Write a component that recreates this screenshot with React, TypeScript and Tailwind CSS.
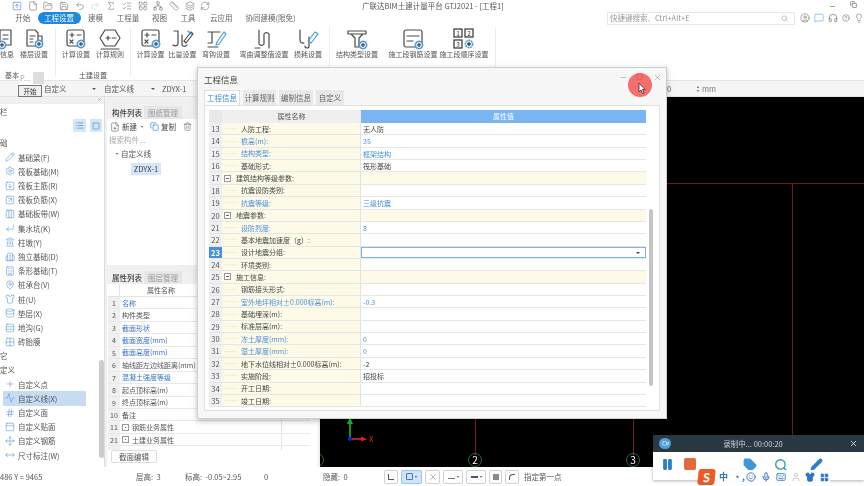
import type { ReactNode } from 'react';
import {
  SquareArrowUp, File, FolderOpen, Save, Undo2, Redo2, Sigma, ListChecks, LayoutGrid, Network, Ruler, Layers, RefreshCw,
  Search, CircleUser, MessageSquare, Headphones, HelpCircle, Lightbulb, X, Minus, Square, Copy, Trash2, FilePlus,
  Pencil, Settings, SquareArrowDown, SquareArrowUpRight, Columns3, Database, Landmark, Building2, Building, MapPin,
  Rows3, Grid2x2, Plus, Activity, Hash, PanelTop, Move, MoveHorizontal, List, Smile, Mic, Keyboard, User, Shirt,
  Pause, Tag, Video, CornerDownLeft,
} from 'lucide-react';

const Gear = ({ x = 17, y = 17 }: { x?: number; y?: number }) => (
  <g>
    <circle cx={x} cy={y} r={3.6} fill="#fff" stroke="#4b9be0" strokeWidth={1.6} strokeDasharray="2 .6" />
    <circle cx={x} cy={y} r={1.2} fill="#4b9be0" />
  </g>
);

const Ico = ({ children }: { children: ReactNode }) => (
  <svg width={24} height={24} viewBox="0 0 24 24" fill="none" stroke="#4a4a4a" strokeWidth={1.2} strokeLinecap="round" strokeLinejoin="round">
    {children}
  </svg>
);

const CalcIcon = () => (
  <Ico>
    <rect x={3} y={3} width={17} height={16} rx={2} />
    <path d="M6 8h4M8 6v4M13 8h4M6 13l3 3M9 13l-3 3" />
    <Gear />
  </Ico>
);

const ribbonIcons: Record<string, ReactNode> = {
  info: <Ico><path d="M5 3h11v15H5zM8 8h5M8 12h5" /><Gear x={7} y={18} /></Ico>,
  floor: <Ico><path d="M5 3h8l3 3v13H5zM8 9h5M8 12h3M8 15h3M16 9h4v5" /><Gear /></Ico>,
  calc: <CalcIcon />,
  rule: <Ico><path d="M7 3h10l5 8-5 8H7l-5-8zM8 11h4M10 9v4M14 11h4M3 22h18" /></Ico>,
  ratio: <Ico><path d="M3 4h4v13a3 3 0 0 1-5 1M11 8v10a3 3 0 0 0 5 0M13 14L20 5l2 2-7 9z" stroke="#4a4a4a" /><path d="M17 4l4 4" stroke="#4b9be0" /></Ico>,
  hook: <Ico><path d="M4 5h12M8 5v11H4M4 20h10" /><path d="M13 15l7-10 2 2-7 10-3 1z" stroke="#4b9be0" /></Ico>,
  bend: <Ico><path d="M7 3v14a3 3 0 0 0 5 0V7a3 3 0 0 1 5 0v14M3 21h5" /></Ico>,
  loss: <Ico><path d="M4 3v10a3 3 0 0 0 4 3M13 10v9a2 2 0 0 1-4 0" /><path d="M12 14l7-9 3 2-7 9z" stroke="#4b9be0" /></Ico>,
  struct: <Ico><path d="M3 4h18v3H3zM6 7l4 4v9h4v-9l4-4" /><Gear x={18} y={18} /></Ico>,
  seg: <Ico><rect x={3} y={3} width={18} height={17} rx={2} /><path d="M6 9h12M6 14h6" /><Gear x={18} y={18} /></Ico>,
  order: (
    <svg width={24} height={24} viewBox="0 0 24 24" fill="none" stroke="#333" strokeWidth={1.2}>
      <rect x={2} y={2} width={8} height={8} />
      <rect x={13} y={2} width={8} height={8} />
      <rect x={2} y={13} width={8} height={8} />
      <text x={6} y={8.5} fontSize={6.5} textAnchor="middle" fill="#333" stroke="none">1</text>
      <text x={17} y={8.5} fontSize={6.5} textAnchor="middle" fill="#333" stroke="none">2</text>
      <text x={6} y={19.5} fontSize={6.5} textAnchor="middle" fill="#333" stroke="none">3</text>
      <Gear x={17} y={17} />
    </svg>
  ),
};

const RibbonItem = ({ w, icon, label }: { w: string; icon: string; label: string }) => (
  <div className={`flex flex-col items-center shrink-0 ${w}`}>
    <div className="h-[24px] flex items-center justify-center">{ribbonIcons[icon]}</div>
    <span className="-mt-[2px] text-[7px] leading-[10px] whitespace-nowrap text-[#555]">{label}</span>
  </div>
);

const tabs = [
  { t: '建模', w: 'w-[30px]' },
  { t: '工程量', w: 'w-[36px]' },
  { t: '视图', w: 'w-[28px]' },
  { t: '工具', w: 'w-[30px]' },
  { t: '云应用', w: 'w-[38px]' },
  { t: '协同建模(限免)', w: 'w-[62px]' },
];

const qat = [SquareArrowUp, File, FolderOpen, Save, Undo2, Redo2, Sigma, ListChecks, LayoutGrid, Network, Ruler, Layers, RefreshCw];

const leftItems = [
  { t: '基础梁(F)', I: Pencil },
  { t: '筏板基础(M)', I: Settings },
  { t: '筏板主筋(R)', I: SquareArrowDown },
  { t: '筏板负筋(X)', I: SquareArrowUpRight },
  { t: '基础板带(W)', I: Columns3 },
  { t: '集水坑(K)', I: CornerDownLeft },
  { t: '柱墩(Y)', I: Landmark },
  { t: '独立基础(D)', I: Building2 },
  { t: '条形基础(T)', I: Building },
  { t: '桩承台(V)', I: MapPin },
  { t: '桩(U)', I: Shirt },
  { t: '垫层(X)', I: Database },
  { t: '地沟(G)', I: Rows3 },
  { t: '砖胎膜', I: Grid2x2 },
];

const customItems = [
  { t: '自定义点', I: Plus },
  { t: '自定义线(X)', I: Activity, on: true },
  { t: '自定义面', I: Hash },
  { t: '自定义贴面', I: PanelTop },
  { t: '自定义钢筋', I: Move },
  { t: '尺寸标注(W)', I: MoveHorizontal },
];

const attrRows = [
  { n: '1', t: '名称', blue: true },
  { n: '2', t: '构件类型' },
  { n: '3', t: '截面形状', blue: true },
  { n: '4', t: '截面宽度(mm)', blue: true },
  { n: '5', t: '截面高度(mm)', blue: true },
  { n: '6', t: '轴线距左边线距离(mm)' },
  { n: '7', t: '混凝土强度等级', blue: true },
  { n: '8', t: '起点顶标高(m)' },
  { n: '9', t: '终点顶标高(m)' },
  { n: '10', t: '备注' },
  { n: '11', t: '钢筋业务属性', box: true },
  { n: '21', t: '土建业务属性', box: true },
  { n: '', t: '', box: false },
];

type Row = { n: number; t: string; v?: string; blue?: boolean; group?: boolean; sel?: boolean };

const infoRows: Row[] = [
  { n: 13, t: '人防工程:', v: '无人防' },
  { n: 14, t: '檐高(m):', v: '35', blue: true },
  { n: 15, t: '结构类型:', v: '框架结构', blue: true },
  { n: 16, t: '基础形式:', v: '筏形基础' },
  { n: 17, t: '建筑结构等级参数:', group: true },
  { n: 18, t: '抗震设防类别:' },
  { n: 19, t: '抗震等级:', v: '三级抗震', blue: true },
  { n: 20, t: '地震参数:', group: true },
  { n: 21, t: '设防烈度:', v: '8', blue: true },
  { n: 22, t: '基本地震加速度（g）:' },
  { n: 23, t: '设计地震分组:', sel: true },
  { n: 24, t: '环境类别:' },
  { n: 25, t: '施工信息:', group: true },
  { n: 26, t: '钢筋接头形式:' },
  { n: 27, t: '室外地坪相对±0.000标高(m):', v: '-0.3', blue: true },
  { n: 28, t: '基础埋深(m):' },
  { n: 29, t: '标准层高(m):' },
  { n: 30, t: '冻土厚度(mm):', v: '0', blue: true },
  { n: 31, t: '湿土厚度(mm):', v: '0', blue: true },
  { n: 32, t: '地下水位线相对±0.000标高(m):', v: '-2' },
  { n: 33, t: '实施阶段:', v: '招投标' },
  { n: 34, t: '开工日期:' },
  { n: 35, t: '竣工日期:' },
];

function InfoRow({ r }: { r: Row }) {
  const color = r.blue ? 'text-[#4a90d9]' : 'text-[#444]';
  return (
    <div className="flex h-[12.36px] border-b border-[#e6e6e6] text-[7px] leading-[12px]">
      <div className={`w-[13px] shrink-0 text-center text-[7.5px] ${r.sel ? 'bg-[#4a90d9] text-white font-bold' : 'bg-[#f0f0f0] text-[#555]'}`}>{r.n}</div>
      <div className={`w-[139px] shrink-0 flex items-center bg-[#fdfbe8] whitespace-nowrap border-r border-[#e2e2e2] ${color}`}>
        {r.group ? (
          <>
            <span className="ml-[2px] w-[7px] h-[7px] border border-[#999] bg-white flex items-center justify-center">
              <span className="w-[3px] h-px bg-[#666]" />
            </span>
            <span className="ml-[5px] text-[#444]">{r.t}</span>
          </>
        ) : (
          <>
            <span className="ml-[2px] w-[14px] h-px bg-[#f3eed8]" />
            <span className="ml-[3px]">{r.t}</span>
          </>
        )}
      </div>
      <div className={`flex-1 relative pl-[2px] whitespace-nowrap ${r.group ? 'bg-[#fdfbe8]' : 'bg-white'} ${r.blue ? 'text-[#4a90d9]' : 'text-[#444]'} ${r.sel ? 'border border-[#7fb2e5]' : ''}`}>
        {r.v}
        {r.sel && <span className="absolute right-[5px] top-[4px] w-0 h-0 border-x-[2px] border-x-transparent border-t-[2px] border-t-[#444]" />}
      </div>
    </div>
  );
}

function Dropdown({ w, label }: { w: string; label: string }) {
  return (
    <div className={`flex items-center justify-between pl-[1px] pr-[4px] mr-[3px] ${w}`}>
      <span className="text-[#555]">{label}</span>
      <span className="w-0 h-0 border-x-[2px] border-x-transparent border-t-[2px] border-t-[#555]" />
    </div>
  );
}

function StatusBtn({ w, on, children, caret }: { w: string; on?: boolean; children: ReactNode; caret?: boolean }) {
  return (
    <div className={`h-[14px] ${w} rounded-[2px] border flex items-center justify-center gap-[2px] ${on ? 'bg-[#cfe4f7] border-[#9cc4e8]' : 'bg-white border-[#d0d0d0]'}`}>
      {children}
      {caret && <span className="w-0 h-0 border-x-[1.5px] border-x-transparent border-t-[2px] border-t-[#555]" />}
    </div>
  );
}

export default function App() {
  return (
    <div className="relative w-[864px] h-[486px] overflow-hidden bg-white flex flex-col text-[7.5px] text-[#444] blur-[0.3px] font-['Noto_Sans_CJK_SC','Noto_Sans',sans-serif]">
      {/* title row */}
      <div className="h-[11px] shrink-0 flex items-center relative">
        <div className="flex items-center w-[350px] pl-[12px] gap-[5.7px]">
          {qat.map((I, i) => (
            <I key={i} size={10} strokeWidth={1.3} className={i === 0 ? 'text-[#2f6fb5]' : i === 5 ? 'text-[#ccc]' : 'text-[#666]'} />
          ))}
        </div>
        <span className="ml-[12px] whitespace-nowrap text-[#555]">广联达BIM土建计量平台 GTJ2021 - [工程1]</span>
        <Minus size={7} className="absolute left-[829px] top-[3px] text-[#555]" />
        <Copy size={7} className="absolute left-[850px] top-[1px] text-[#555]" />
      </div>

      {/* tabs row */}
      <div className="h-[14px] shrink-0 flex items-center whitespace-nowrap text-[#666]">
        <div className="ml-[8px] w-[30px] text-center">开始</div>
        <div className="w-[44px] h-[12px] rounded-full bg-[#1d87e4] text-white text-center leading-[12px]">工程设置</div>
        {tabs.map((t) => (
          <div key={t.t} className={`text-center ${t.w}`}>{t.t}</div>
        ))}
        <div className="ml-[306px] w-[188px] h-[13px] shrink-0 border border-[#e8e8e8] flex items-center justify-between px-[2px] text-[#999]">
          <span>快捷键搜索、Ctrl+Alt+E</span>
          <Search size={7} className="mr-[4px]" />
        </div>
        <div className="ml-[5px] flex items-center gap-[4px] text-[#555]">
          <CircleUser size={10} strokeWidth={1.2} />
          <MessageSquare size={10} className="text-[#4b9be0]" strokeWidth={1.4} />
          <Headphones size={10} strokeWidth={1.4} />
          <HelpCircle size={8} strokeWidth={1.4} />
          <Lightbulb size={10} strokeWidth={1.2} />
        </div>
      </div>

      {/* ribbon */}
      <div className="h-[56px] shrink-0 flex pt-[2px] -ml-[5px] border-b border-[#e4e4e4]">
        <div className="w-[61px] shrink-0 flex flex-col border-r border-[#ececec] mb-[3px]">
          <div className="flex">
            <RibbonItem w="w-[24px]" icon="info" label="信息" />
            <RibbonItem w="w-[30px]" icon="floor" label="楼层设置" />
          </div>
          <span className="mt-[11px] ml-[10px] text-[7px] text-[#555] leading-[10px]">基本</span>
        </div>
        <div className="w-[75px] shrink-0 flex flex-col pl-[3px] border-r border-[#ececec] mb-[3px]">
          <div className="flex">
            <RibbonItem w="w-[34px]" icon="calc" label="计算设置" />
            <RibbonItem w="w-[34px]" icon="rule" label="计算规则" />
          </div>
          <span className="mt-[11px] w-[68px] text-center text-[7px] text-[#555] leading-[10px]">土建设置</span>
        </div>
        <div className="w-[199px] shrink-0 flex pl-[3px] border-r border-[#ececec] mb-[3px]">
          <RibbonItem w="w-[33px]" icon="calc" label="计算设置" />
          <RibbonItem w="w-[31px]" icon="ratio" label="比量设置" />
          <RibbonItem w="w-[36px]" icon="hook" label="弯钩设置" />
          <RibbonItem w="w-[60px]" icon="bend" label="弯曲调整值设置" />
          <RibbonItem w="w-[28px]" icon="loss" label="损耗设置" />
        </div>
        <div className="w-[166px] shrink-0 flex pl-[2px] border-r border-[#ececec] mb-[3px]">
          <RibbonItem w="w-[50px]" icon="struct" label="结构类型设置" />
          <RibbonItem w="w-[62px]" icon="seg" label="施工段钢筋设置" />
          <RibbonItem w="w-[40px]" icon="order" label="施工段顺序设置" />
        </div>
      </div>

      {/* selector row */}
      <div className="h-[16px] shrink-0 flex items-center bg-[#f5f5f5] border-b border-[#e2e2e2] pl-[43px]">
        <Dropdown w="w-[57px]" label="自定义" />
        <Dropdown w="w-[56px]" label="自定义线" />
        <span className="w-[505px] text-[#555]">ZDYX-1</span>
        <span className="w-[30px] text-[#666]">0</span>
        <span className="flex flex-col gap-[2px]">
          <span className="w-0 h-0 border-x-[1.5px] border-x-transparent border-b-[2px] border-b-[#555]" />
          <span className="w-0 h-0 border-x-[1.5px] border-x-transparent border-t-[2px] border-t-[#555]" />
        </span>
        <span className="ml-[3px] text-[#777]">mm</span>
      </div>

      {/* work area */}
      <div className="flex-1 min-h-0 flex bg-[#f0f0f0]">
        {/* left nav panel */}
        <div className="w-[105px] shrink-0 flex flex-col bg-white border-r border-[#ddd] relative">
          <div className="h-[7px] bg-[#f0f0f0] flex justify-end pr-[2px]">
            <X size={5} className="text-[#999]" />
          </div>
          <div className="h-[15px] flex items-center text-[#555]">栏</div>
          <div className="h-[15px] flex justify-end gap-[4px] pr-[2px]">
            <div className="w-[13px] h-[13px] bg-[#d4e6f7] flex items-center justify-center"><List size={9} className="text-[#4a90d9]" /></div>
            <div className="w-[12px] h-[13px] bg-[#d4e6f7] flex items-center justify-center"><Square size={8} className="text-[#4a90d9]" /></div>
          </div>
          <div className="h-[14.2px] leading-[14px] mt-[2px] text-[#555]">础</div>
          {leftItems.map(({ t, I }) => (
            <div key={t} className="h-[14.2px] flex items-center pl-[5px] gap-[3px] whitespace-nowrap text-[#555]">
              <I size={10} strokeWidth={1.3} className="text-[#4a90d9]" />
              <span>{t}</span>
            </div>
          ))}
          <div className="h-[14.2px] leading-[14px] text-[#555]">它</div>
          <div className="h-[14.2px] leading-[14px] text-[#555]">定义</div>
          {customItems.map(({ t, I, on }) => (
            <div key={t} className={`h-[14.2px] w-[83px] ml-[3px] flex items-center pl-[2px] gap-[3px] whitespace-nowrap text-[#555] ${on ? 'bg-[#c5dcf3]' : ''}`}>
              <I size={10} strokeWidth={1.3} className="text-[#4a90d9]" />
              <span>{t}</span>
            </div>
          ))}
          <div className="absolute left-[99px] top-[263px] w-[5px] h-[98px] rounded-full bg-[#ccc]" />
        </div>

        {/* component panels */}
        <div className="w-[211px] ml-[2px] shrink-0 flex flex-col">
          <div className="h-[168px] shrink-0 flex flex-col bg-white">
            <div className="h-[22px] shrink-0 bg-[#f0f0f0] flex items-end">
              <div className="h-[13px] leading-[13px] w-[34px] ml-[3px] text-center font-medium text-[#444]">构件列表</div>
              <div className="h-[13px] leading-[13px] w-[38px] bg-[#e6e6e6] text-center text-[#999]">图纸管理</div>
            </div>
            <div className="h-[15px] flex items-center pl-[3px] gap-[2px] text-[#444]">
              <FilePlus size={10} strokeWidth={1.2} />
              <span>新建</span>
              <span className="w-0 h-0 ml-[2px] border-x-[1.5px] border-x-transparent border-t-[2px] border-t-[#555]" />
              <Copy size={9} className="ml-[5px] text-[#4a90d9]" />
              <span>复制</span>
              <Trash2 size={9} className="ml-[5px]" strokeWidth={1.2} />
            </div>
            <div className="h-[12px] pl-[2px] leading-[12px] text-[#aaa]">搜索构件...</div>
            <div className="h-[16px] pl-[9px] flex items-center gap-[2px] text-[#555]">
              <span className="w-0 h-0 border-x-[1.5px] border-x-transparent border-t-[2px] border-t-[#555]" />
              <span className="ml-[1px]">自定义线</span>
            </div>
            <div className="ml-[24px] mt-[1px] w-[30px] h-[12px] leading-[12px] text-center bg-[#d4e6f7] text-[#444]">ZDYX-1</div>
          </div>
          <div className="flex-1 min-h-0 mt-[6px] flex flex-col bg-white relative">
            <div className="h-[13px] shrink-0 bg-[#f0f0f0] flex">
              <div className="w-[34px] ml-[3px] text-center font-medium text-[#444] leading-[13px]">属性列表</div>
              <div className="w-[38px] bg-[#e6e6e6] text-center text-[#999] leading-[13px]">图层管理</div>
            </div>
            <div className="w-[202px] ml-[1px] flex-1 min-h-0 overflow-hidden">
              <div className="flex h-[13px] border-b border-[#e4e4e4] leading-[13px]">
                <div className="w-[12px] border-r border-[#e4e4e4]" />
                <div className="w-[82px] text-center text-[7px] text-[#555]">属性名称</div>
              </div>
              {attrRows.map((r, i) => (
                <div key={i} className="flex h-[12.44px] border-b border-[#e8e8e8] text-[7px] leading-[12px]">
                  <div className="w-[12px] shrink-0 bg-[#f0f0f0] text-center text-[#555]">{r.n}</div>
                  <div className={`w-[162px] shrink-0 pl-[2px] border-r border-[#e4e4e4] whitespace-nowrap overflow-hidden flex items-center gap-[3px] ${r.blue ? 'text-[#3f74c4]' : 'text-[#555]'}`}>
                    {r.box && (
                      <span className="w-[7px] h-[7px] border border-[#999] flex items-center justify-center">
                        <span className="w-[1px] h-[1px] bg-[#666]" />
                      </span>
                    )}
                    <span>{r.t}</span>
                  </div>
                </div>
              ))}
            </div>
            <div className="absolute left-[203px] top-[127px] w-[5px] h-[18px] rounded-full bg-[#ccc]" />
            <div className="h-[17px] shrink-0 pl-[4px] pb-[2px]">
              <div className="w-[46px] h-[13px] border border-[#ddd] rounded-[2px] text-center leading-[12px] text-[#555]">截面编辑</div>
            </div>
          </div>
        </div>

        {/* canvas: grid lines sit where the drawing puts them */}
        <div className="flex-1 ml-[2px] bg-black relative overflow-hidden">
          <div className="absolute left-0 right-0 top-[86px] h-px bg-[#6a1a2a]" />
          <div className="absolute left-[155px] top-[86px] bottom-[12px] w-px bg-[#7a1c2a]" />
          <div className="absolute left-[313px] top-[86px] bottom-[12px] w-px bg-[#7a1c2a]" />
          <div className="absolute left-[472px] top-[86px] bottom-0 w-px bg-[#6a1a2a]" />
          <div className="absolute left-[148px] top-[356px] w-[14px] h-[14px] rounded-full border border-[#2f6b35] text-white text-[10px] leading-[12px] text-center">2</div>
          <div className="absolute left-[306px] top-[356px] w-[14px] h-[14px] rounded-full border border-[#2f6b35] text-white text-[10px] leading-[12px] text-center">3</div>
          <div className="absolute -left-[10px] top-[356px] w-[14px] h-[14px] rounded-full border border-[#2f6b35]" />
          <svg className="absolute left-[22px] top-[318px]" width={36} height={32} viewBox="0 0 36 32">
            <path d="M8 24V8" stroke="#10c030" strokeWidth={1.6} />
            <path d="M8 2l3 7H5z" fill="#10c030" />
            <path d="M8 24h12" stroke="#e02020" strokeWidth={1.6} />
            <path d="M25 24l-6-2.6v5.2z" fill="#e02020" />
            <circle cx={8} cy={24} r={2} fill="#1a1ae0" />
            <text x={27} y={27} fontSize={8} fill="#e02020">X</text>
          </svg>
        </div>
      </div>

      {/* status bar */}
      <div className="h-[19px] shrink-0 flex items-center bg-white whitespace-nowrap text-[#555]">
        <span className="w-[136px]">486 Y = 9465</span>
        <span className="w-[49px]">层高:&nbsp;&nbsp;3</span>
        <span className="w-[79px]">标高:&nbsp;&nbsp;-0.05~2.95</span>
        <span className="w-[59px]">0</span>
        <span className="w-[61px]">隐藏:&nbsp;&nbsp;0</span>
        <div className="flex items-center gap-[3px]">
          <StatusBtn w="w-[14px]"><span className="w-[6px] h-[6px] border-l border-b border-[#555]" /></StatusBtn>
          <StatusBtn w="w-[21px]" on caret><span className="w-[7px] h-[7px] border border-[#3f74c4] rounded-[1px]" /></StatusBtn>
          <StatusBtn w="w-[15px]"><X size={10} strokeWidth={1} /></StatusBtn>
          <StatusBtn w="w-[20px]" caret><span className="w-[7px] h-[5px] border-b border-[#777]" /></StatusBtn>
          <StatusBtn w="w-[20px]" caret><span className="w-[7px] h-[2px] bg-[#555]" /></StatusBtn>
          <StatusBtn w="w-[13px]"><span className="w-[6px] h-[6px] bg-[#888]" /></StatusBtn>
          <StatusBtn w="w-[14px]"><span className="w-[6px] h-[6px] border-l border-t border-[#555] rounded-tl-[4px]" /></StatusBtn>
        </div>
        <span className="ml-[5px]">指定第一点</span>
      </div>

      {/* tooltip floating over the ribbon */}
      <div className="absolute left-[19px] top-[71px] w-[25px] h-[14px] bg-white/90 flex items-center justify-between pl-[1px] text-[#aaa]">
        <span>P...</span>
        <span className="w-[11px] h-[12px] bg-[#ddd]" />
      </div>
      <div className="absolute left-[18px] top-[85px] w-[24px] h-[12px] bg-[#f0f0f0] border border-[#777] text-center text-[6.5px] leading-[10px] text-[#333]">开始</div>

      {/* project info dialog */}
      <div className="absolute left-[197px] top-[67px] w-[470px] h-[352px] bg-[#f7f7f7] border border-[#cfcfcf] shadow-[0_2px_6px_rgba(0,0,0,0.25)] flex flex-col">
        <div className="h-[22px] shrink-0 flex items-center pl-[6px] text-[8.5px] text-[#444]">工程信息</div>
        <div className="h-[15px] shrink-0 flex pl-[6px] gap-[3px]">
          <div className="w-[36px] bg-white border border-b-0 border-[#ddd] text-center leading-[14px] text-[#3b8bdc]">工程信息</div>
          <div className="w-[33px] bg-[#e8e8e8] text-center leading-[15px] text-[#666]">计算规则</div>
          <div className="w-[34px] bg-[#e8e8e8] text-center leading-[15px] text-[#666]">编制信息</div>
          <div className="w-[28px] bg-[#e8e8e8] text-center leading-[15px] text-[#666]">自定义</div>
        </div>
        <div className="flex-1 mx-[6px] mb-[7px] bg-white border border-[#e0e0e0] px-[4px] pt-[4px] flex">
          <div className="w-[437px] shrink-0">
            <div className="flex h-[13px] text-[7px] leading-[13px]">
              <div className="w-[13px] bg-[#e8e8e8]" />
              <div className="w-[139px] bg-[#efefef] text-center text-[#555]">属性名称</div>
              <div className="flex-1 bg-[#79b5f0] text-center text-white">属性值</div>
            </div>
            {infoRows.map((r) => (
              <InfoRow key={r.n} r={r} />
            ))}
          </div>
          <div className="flex-1 relative">
            <div className="absolute left-[3px] top-[99px] w-[4px] h-[177px] rounded-full bg-[#c4c4c4]" />
          </div>
        </div>
        <Minus size={9} strokeWidth={1} className="absolute left-[421px] top-[5px] text-[#666]" />
        <div className="absolute left-[430px] top-[5px] w-[24px] h-[24px] rounded-full bg-[#f56f6f]" />
        <Square size={7} strokeWidth={1} className="absolute left-[438px] top-[5px] text-[#a33]" />
        <svg className="absolute left-[440px] top-[14px]" width={8} height={12} viewBox="0 0 8 12">
          <path d="M1 1v9l2-2 1.5 3.4 1.4-.6L4.5 7.5H7z" fill="#fff" stroke="#333" strokeWidth={0.8} />
        </svg>
        <X size={9} strokeWidth={1} className="absolute left-[455px] top-[5px] text-[#666]" />
      </div>

      {/* screen recorder widget */}
      <div className="absolute left-[653px] top-[435px] w-[211px] h-[45px] flex flex-col bg-white shadow-[0_1px_3px_rgba(0,0,0,0.3)]">
        <div className="h-[17px] shrink-0 bg-[#2a3842] flex items-center px-[6px] text-[#c8d0d4]">
          <span className="w-[12px] h-[11px] rounded-full bg-[#4d9ee0] flex items-center justify-center"><Video size={7} className="text-white" /></span>
          <span className="flex-1 text-center pr-[14px]">录制中... 00:00:20</span>
          <X size={9} className="text-white" />
        </div>
        <div className="flex-1 flex items-start pt-[6px] pl-[8px]">
          <Pause size={13} className="text-[#2f7fc7] fill-[#2f7fc7]" />
          <span className="ml-[10px] w-[12px] h-[12px] rounded-[2px] bg-[#df6a3a]" />
          <Tag size={14} className="ml-[47px] text-[#3f95d8] fill-[#3f95d8]" />
          <Search size={14} strokeWidth={2.4} className="ml-[17px] text-[#2fa0a0]" />
          <Pencil size={13} className="ml-[22px] text-[#2f7fc7] fill-[#2f7fc7]" />
        </div>
      </div>
      <div className="absolute left-[698px] top-[470px] w-[132px] h-[14px] flex items-center bg-white/95 text-[#2f72c4]">
        <span className="w-[17px] h-[16px] rounded-[3px] bg-[#ee5a24] text-white text-center font-bold text-[12px] leading-[16px] -skew-x-6">S</span>
        <span className="ml-[4px] w-[12px] font-bold text-[9px]">中</span>
        <span className="ml-[2px] w-[10px] font-bold text-[9px] leading-[8px]">•,</span>
        <Smile size={10} className="ml-[3px]" strokeWidth={2.2} />
        <Mic size={10} className="ml-[5px]" strokeWidth={2.2} />
        <Keyboard size={10} className="ml-[5px]" strokeWidth={2} />
        <User size={10} className="ml-[5px] text-[#c8c8c8]" strokeWidth={2.4} />
        <Shirt size={10} className="ml-[4px] fill-[#2f72c4]" />
        <LayoutGrid size={9} className="ml-[5px] fill-[#2f72c4]" />
      </div>
    </div>
  );
}
